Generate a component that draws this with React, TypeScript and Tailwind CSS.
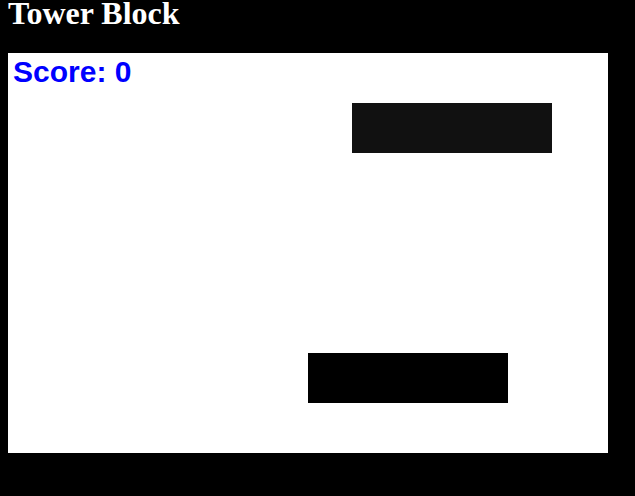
const blocks = [
  { x: 344, y: 50, color: "bg-[#111111]" },
  { x: 300, y: 300, color: "bg-black" },
];

export default function App() {
  return (
    <div className="min-h-screen bg-black px-2 pb-2">
      <h1 className="h-[27px] font-['Liberation_Serif',serif] text-[32px] font-bold leading-[27px] text-white">
        Tower Block
      </h1>
      {/* game board */}
      <div className="relative mt-[26px] h-[400px] w-[600px] bg-white">
        <div className="absolute left-[5px] top-[4px] font-['Liberation_Sans',Arial,sans-serif] text-[30px] font-bold leading-[30px] text-[#0000ff]">
          Score: 0
        </div>
        {blocks.map((b, i) => (
          <div
            key={i}
            className={`absolute h-[50px] w-[200px] ${b.color}`}
            style={{ left: b.x, top: b.y }}
          />
        ))}
      </div>
    </div>
  );
}
